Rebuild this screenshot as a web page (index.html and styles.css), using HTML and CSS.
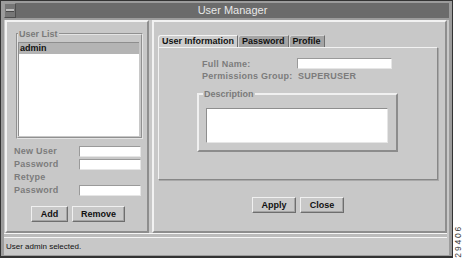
FILE: index.html
```html
<!DOCTYPE html>
<html>
<head>
<meta charset="utf-8">
<title>User Manager</title>
<link rel="stylesheet" href="styles.css">
</head>
<body>
<div class="screen">
  <div class="window">
    <div class="titlebar">
      <div class="menu-btn"><span class="menu-bar"></span></div>
      <div class="title">User Manager</div>
    </div>
    <div class="client">
      <div class="main">
        <div class="panel panel-left">
          <fieldset class="group userlist">
            <legend>User List</legend>
            <div class="listbox">
              <div class="item selected">admin</div>
            </div>
          </fieldset>
          <div class="form">
            <label class="lbl">New User</label><input class="field" type="text">
            <label class="lbl">Password</label><input class="field" type="password">
            <label class="lbl">Retype</label><span></span>
            <label class="lbl">Password</label><input class="field" type="password">
          </div>
          <div class="btnrow btnrow-left">
            <button class="btn btn-add">Add</button>
            <button class="btn btn-remove">Remove</button>
          </div>
        </div>
        <div class="panel panel-right">
          <div class="tabs">
            <div class="tab active">User Information</div>
            <div class="tab">Password</div>
            <div class="tab">Profile</div>
          </div>
          <div class="tabpanel">
            <div class="info">
              <span class="lbl">Full Name:</span><input class="field field-wide" type="text">
              <span class="lbl">Permissions Group:</span><span class="lbl value">SUPERUSER</span>
            </div>
            <fieldset class="group desc">
              <legend>Description</legend>
              <div class="textarea"></div>
            </fieldset>
          </div>
          <div class="btnrow btnrow-right">
            <button class="btn btn-dlg">Apply</button>
            <button class="btn btn-dlg">Close</button>
          </div>
        </div>
      </div>
      <div class="sep"></div>
      <div class="status">User admin selected.</div>
    </div>
  </div>
  <div class="margin"><span class="fig">29406</span></div>
</div>
</body>
</html>
```
FILE: styles.css
```css
html, body {
  margin: 0;
  padding: 0;
  background: #ffffff;
}
body {
  font-family: "Liberation Sans", Arial, sans-serif;
}
.screen {
  display: flex;
  width: 462px;
  height: 258px;
  overflow: hidden;
}
.window {
  box-sizing: border-box;
  width: 453px;
  height: 258px;
  background: #9c9c9c;
  border: 1px solid #333333;
  border-bottom-width: 2px;
  padding: 2px 3px 1px 3px;
  display: flex;
  flex-direction: column;
}
.titlebar {
  height: 15px;
  flex: none;
  display: flex;
  background: #6b6b6b;
  margin-bottom: 2px;
}
.menu-btn {
  box-sizing: border-box;
  width: 12px;
  height: 15px;
  background: #767676;
  border: 1px solid;
  border-color: #9a9a9a #4e4e4e #4e4e4e #9a9a9a;
  display: flex;
  align-items: center;
  justify-content: center;
}
.menu-bar {
  width: 8px;
  height: 2px;
  background: #bdbdbd;
  border-bottom: 1px solid #4a4a4a;
}
.title {
  flex: 1;
  text-align: center;
  font-size: 11px;
  line-height: 15px;
  color: #e8e8e8;
}
.client {
  flex: 1;
  background: #c8c8c8;
  display: flex;
  flex-direction: column;
}
.main {
  height: 213px;
  display: flex;
  gap: 3px;
  padding: 0 2px 0 1px;
}
.panel {
  box-sizing: border-box;
  height: 213px;
  border: 2px solid;
  border-color: #f2f2f2 #8e8e8e #8e8e8e #f2f2f2;
  display: flex;
  flex-direction: column;
}
.panel-left {
  width: 144px;
}
.panel-right {
  flex: 1;
}
.group {
  box-sizing: border-box;
  border: 2px groove #e4e4e4;
  margin: 0;
  min-width: 0;
}
.group legend {
  font-size: 9px;
  line-height: 10px;
  color: #7a7a7a;
  font-weight: bold;
  padding: 0 1px;
}
.userlist {
  margin: 7px 4px 0 9px;
  padding: 3px 2px 1px 0;
}
.listbox {
  box-sizing: border-box;
  height: 94px;
  background: #ffffff;
  border-top: 1px solid #8e8e8e;
  border-left: 1px solid #8e8e8e;
}
.item {
  font-size: 9px;
  font-weight: bold;
  line-height: 11px;
  padding-left: 1px;
  color: #111111;
}
.item.selected {
  background: #b4b4b4;
}
.lbl {
  font-size: 9px;
  font-weight: bold;
  color: #7c7c7c;
  letter-spacing: 0.25px;
}
.form {
  margin: 6px 0 0 7px;
  display: grid;
  grid-template-columns: 65px 62px;
  grid-auto-rows: 12px;
  row-gap: 1px;
  align-items: center;
}
.field {
  box-sizing: border-box;
  width: 62px;
  height: 11px;
  margin: 0;
  padding: 0;
  background: #ffffff;
  border: 1px solid;
  border-color: #9a9a9a #e6e6e6 #e6e6e6 #9a9a9a;
  outline: none;
}
.btnrow {
  display: flex;
  gap: 4px;
}
.btnrow-left {
  margin-top: 10px;
  padding-left: 24px;
}
.btn {
  box-sizing: border-box;
  height: 16px;
  margin: 0;
  padding: 0;
  font-family: "Liberation Sans", Arial, sans-serif;
  font-size: 9px;
  font-weight: bold;
  color: #111111;
  background: #c8c8c8;
  border: 1px solid;
  border-color: #f0f0f0 #6e6e6e #6e6e6e #f0f0f0;
  box-shadow: inset -1px -1px 0 #a4a4a4;
}
.btn-add {
  width: 37px;
}
.btn-remove {
  width: 53px;
}
.btn-dlg {
  width: 44px;
}
.tabs {
  display: flex;
  margin: 13px 0 0 4px;
  height: 12px;
}
.tab {
  box-sizing: border-box;
  height: 12px;
  padding: 0 3px;
  font-size: 9px;
  font-weight: bold;
  line-height: 11px;
  color: #111111;
  background: #a4a4a4;
  border-top: 1px solid #d6d6d6;
  border-left: 1px solid #d6d6d6;
  border-right: 1px solid #6e6e6e;
  border-top-left-radius: 3px;
}
.tab.active {
  background: #cdcdcd;
  border-top-color: #f4f4f4;
  border-left-color: #f4f4f4;
}
.tabpanel {
  box-sizing: border-box;
  width: 280px;
  height: 133px;
  margin-left: 4px;
  background: #cacaca;
  border: 1px solid;
  border-color: #f2f2f2 #878787 #878787 #f2f2f2;
  box-shadow: 1px 1px 0 #a8a8a8;
  display: flex;
  flex-direction: column;
}
.info {
  margin: 10px 0 0 43px;
  display: grid;
  grid-template-columns: 95px 95px;
  grid-template-rows: 11px 12px;
  row-gap: 1px;
  align-items: center;
}
.field-wide {
  width: 95px;
}
.value {
  padding-left: 1px;
}
.desc {
  width: 201px;
  margin: 7px 0 0 38px;
  padding: 9px 8px 7px 7px;
  border: 2px solid;
  border-color: #f0f0f0 #8c8c8c #8c8c8c #f0f0f0;
}
.desc legend {
  margin-left: -3px;
}
.textarea {
  box-sizing: border-box;
  width: 182px;
  height: 35px;
  background: #ffffff;
  border: 1px solid;
  border-color: #8e8e8e #e6e6e6 #e6e6e6 #8e8e8e;
}
.btnrow-right {
  width: 280px;
  margin: 17px 0 0 4px;
  justify-content: center;
}
.sep {
  box-sizing: border-box;
  height: 5px;
  border-top: 1px solid #f6f6f6;
  border-bottom: 1px solid #f6f6f6;
  background: #bcbcbc;
  margin-right: 2px;
}
.status {
  height: 17px;
  line-height: 17px;
  font-size: 8px;
  color: #111111;
  padding-left: 2px;
}
.margin {
  flex: 1;
  display: flex;
  align-items: flex-end;
  justify-content: center;
  padding-bottom: 0;
}
.fig {
  writing-mode: vertical-rl;
  transform: rotate(180deg);
  font-size: 8.5px;
  letter-spacing: 1.8px;
  color: #3a3a3a;
  line-height: 8px;
}
```
